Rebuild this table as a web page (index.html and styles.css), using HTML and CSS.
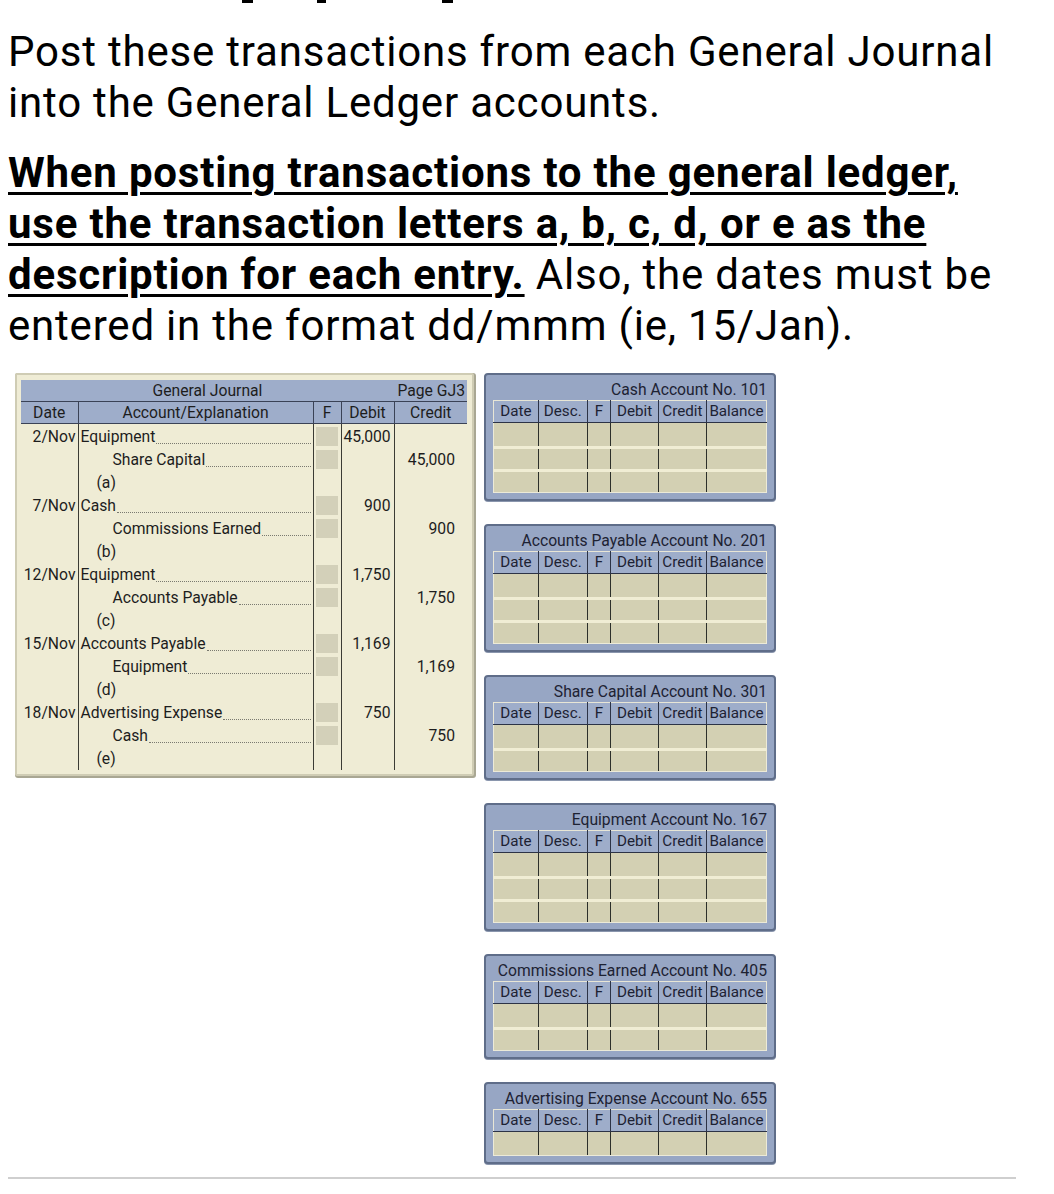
FILE: index.html
```html
<!DOCTYPE html>
<html>
<head>
<meta charset="utf-8">
<link rel="stylesheet" href="styles.css">
</head>
<body>
<div class="cutoff"><span class="m1"></span><span class="m2"></span><span class="m3"></span></div>
<main class="page">
  <p class="intro">Post these transactions from each General Journal into the General Ledger accounts.</p>
  <p class="intro second"><strong class="uline">When posting transactions to the general ledger, use the transaction letters a, b, c, d, or e as the description for each entry.</strong> Also, the dates must be entered in the format dd/mmm (ie, 15/Jan).</p>

  <div class="work">
    <div class="journal">
      <table class="jt">
        <colgroup><col class="c-date"><col class="c-acct"><col class="c-f"><col class="c-dr"><col class="c-cr"></colgroup>
        <thead>
          <tr class="jt-title"><th colspan="4" class="t-center">General Journal</th><th class="t-page">Page GJ3</th></tr>
          <tr class="jt-head"><th>Date</th><th>Account/Explanation</th><th>F</th><th>Debit</th><th>Credit</th></tr>
        </thead>
        <tbody>
          <tr><td class="date">2/Nov</td><td><div class="acct"><span>Equipment</span><i class="lead"></i></div></td><td><div class="fbox"></div></td><td class="num first">45,000</td><td></td></tr>
          <tr><td></td><td><div class="acct cr"><span>Share Capital</span><i class="lead"></i></div></td><td><div class="fbox"></div></td><td></td><td class="num crn">45,000</td></tr>
          <tr><td></td><td class="expl">(a)</td><td></td><td></td><td></td></tr>
          <tr><td class="date">7/Nov</td><td><div class="acct"><span>Cash</span><i class="lead"></i></div></td><td><div class="fbox"></div></td><td class="num">900</td><td></td></tr>
          <tr><td></td><td><div class="acct cr"><span>Commissions Earned</span><i class="lead"></i></div></td><td><div class="fbox"></div></td><td></td><td class="num crn">900</td></tr>
          <tr><td></td><td class="expl">(b)</td><td></td><td></td><td></td></tr>
          <tr><td class="date">12/Nov</td><td><div class="acct"><span>Equipment</span><i class="lead"></i></div></td><td><div class="fbox"></div></td><td class="num">1,750</td><td></td></tr>
          <tr><td></td><td><div class="acct cr"><span>Accounts Payable</span><i class="lead"></i></div></td><td><div class="fbox"></div></td><td></td><td class="num crn">1,750</td></tr>
          <tr><td></td><td class="expl">(c)</td><td></td><td></td><td></td></tr>
          <tr><td class="date">15/Nov</td><td><div class="acct"><span>Accounts Payable</span><i class="lead"></i></div></td><td><div class="fbox"></div></td><td class="num">1,169</td><td></td></tr>
          <tr><td></td><td><div class="acct cr"><span>Equipment</span><i class="lead"></i></div></td><td><div class="fbox"></div></td><td></td><td class="num crn">1,169</td></tr>
          <tr><td></td><td class="expl">(d)</td><td></td><td></td><td></td></tr>
          <tr><td class="date">18/Nov</td><td><div class="acct"><span>Advertising Expense</span><i class="lead"></i></div></td><td><div class="fbox"></div></td><td class="num">750</td><td></td></tr>
          <tr><td></td><td><div class="acct cr"><span>Cash</span><i class="lead"></i></div></td><td><div class="fbox"></div></td><td></td><td class="num crn">750</td></tr>
          <tr><td></td><td class="expl">(e)</td><td></td><td></td><td></td></tr>
        </tbody>
      </table>
    </div>

    <div class="ledgers">
      <div class="ledger">
        <div class="l-title">Cash Account No. 101</div>
        <table class="lt">
          <colgroup><col class="w-date"><col class="w-desc"><col class="w-f"><col class="w-dr"><col class="w-cr"><col class="w-bal"></colgroup>
          <thead><tr><th>Date</th><th>Desc.</th><th>F</th><th>Debit</th><th>Credit</th><th>Balance</th></tr></thead>
          <tbody>
            <tr><td></td><td></td><td></td><td></td><td></td><td></td></tr>
            <tr><td></td><td></td><td></td><td></td><td></td><td></td></tr>
            <tr><td></td><td></td><td></td><td></td><td></td><td></td></tr>
          </tbody>
        </table>
      </div>
      <div class="ledger">
        <div class="l-title">Accounts Payable Account No. 201</div>
        <table class="lt">
          <colgroup><col class="w-date"><col class="w-desc"><col class="w-f"><col class="w-dr"><col class="w-cr"><col class="w-bal"></colgroup>
          <thead><tr><th>Date</th><th>Desc.</th><th>F</th><th>Debit</th><th>Credit</th><th>Balance</th></tr></thead>
          <tbody>
            <tr><td></td><td></td><td></td><td></td><td></td><td></td></tr>
            <tr><td></td><td></td><td></td><td></td><td></td><td></td></tr>
            <tr><td></td><td></td><td></td><td></td><td></td><td></td></tr>
          </tbody>
        </table>
      </div>
      <div class="ledger">
        <div class="l-title">Share Capital Account No. 301</div>
        <table class="lt">
          <colgroup><col class="w-date"><col class="w-desc"><col class="w-f"><col class="w-dr"><col class="w-cr"><col class="w-bal"></colgroup>
          <thead><tr><th>Date</th><th>Desc.</th><th>F</th><th>Debit</th><th>Credit</th><th>Balance</th></tr></thead>
          <tbody>
            <tr><td></td><td></td><td></td><td></td><td></td><td></td></tr>
            <tr><td></td><td></td><td></td><td></td><td></td><td></td></tr>
          </tbody>
        </table>
      </div>
      <div class="ledger">
        <div class="l-title">Equipment Account No. 167</div>
        <table class="lt">
          <colgroup><col class="w-date"><col class="w-desc"><col class="w-f"><col class="w-dr"><col class="w-cr"><col class="w-bal"></colgroup>
          <thead><tr><th>Date</th><th>Desc.</th><th>F</th><th>Debit</th><th>Credit</th><th>Balance</th></tr></thead>
          <tbody>
            <tr><td></td><td></td><td></td><td></td><td></td><td></td></tr>
            <tr><td></td><td></td><td></td><td></td><td></td><td></td></tr>
            <tr><td></td><td></td><td></td><td></td><td></td><td></td></tr>
          </tbody>
        </table>
      </div>
      <div class="ledger">
        <div class="l-title">Commissions Earned Account No. 405</div>
        <table class="lt">
          <colgroup><col class="w-date"><col class="w-desc"><col class="w-f"><col class="w-dr"><col class="w-cr"><col class="w-bal"></colgroup>
          <thead><tr><th>Date</th><th>Desc.</th><th>F</th><th>Debit</th><th>Credit</th><th>Balance</th></tr></thead>
          <tbody>
            <tr><td></td><td></td><td></td><td></td><td></td><td></td></tr>
            <tr><td></td><td></td><td></td><td></td><td></td><td></td></tr>
          </tbody>
        </table>
      </div>
      <div class="ledger">
        <div class="l-title">Advertising Expense Account No. 655</div>
        <table class="lt">
          <colgroup><col class="w-date"><col class="w-desc"><col class="w-f"><col class="w-dr"><col class="w-cr"><col class="w-bal"></colgroup>
          <thead><tr><th>Date</th><th>Desc.</th><th>F</th><th>Debit</th><th>Credit</th><th>Balance</th></tr></thead>
          <tbody>
            <tr><td></td><td></td><td></td><td></td><td></td><td></td></tr>
          </tbody>
        </table>
      </div>
    </div>
  </div>
  <hr class="rule">
</main>
</body>
</html>
```

FILE: styles.css
```css
html, body {
  margin: 0;
  padding: 0;
  background: #ffffff;
}
body {
  font-family: Roboto, "Liberation Sans", sans-serif;
  color: #000;
}
.cutoff {
  height: 3px;
  display: flex;
  padding-left: 242px;
}
.cutoff span {
  display: block;
  height: 3px;
  background: #000;
}
.m1 { width: 11px; }
.m2 { width: 9px; margin-left: 64px; }
.m3 { width: 11px; margin-left: 116px; }

.page {
  width: 1008px;
  padding-left: 8px;
}
.intro {
  font-size: 42px;
  line-height: 51px;
  margin: 23px 0 0 0;
  letter-spacing: 0.8px;
}
.intro.second {
  margin-top: 19px;
}
.uline {
  font-weight: 700;
  letter-spacing: 0.8px;
  text-decoration: underline;
  text-decoration-thickness: 3px;
  text-underline-offset: 5px;
}

.work {
  display: flex;
  align-items: flex-start;
  margin-top: 22px;
  padding-left: 7px;
  gap: 10px;
}

/* General journal */
.journal {
  width: 446px;
  background: #efecd5;
  border: 2px solid #cfccb4;
  box-shadow: 1px 1px 0 1px #a9a793;
  border-radius: 2px;
  padding: 5px 5px 4px 4px;
}
.jt {
  width: 446px;
  border-collapse: collapse;
  table-layout: fixed;
  font-size: 15.7px;
  color: #1d1d1d;
}
.c-date { width: 57px; }
.c-acct { width: 235px; }
.c-f { width: 28px; }
.c-dr { width: 53px; }
.c-cr { width: 73px; }

.jt th {
  font-weight: 400;
  background: #9eadca;
  height: 21px;
  padding: 0;
  line-height: 21px;
  white-space: nowrap;
}
.jt-title th {
  height: 21px;
  border-bottom: 1px solid #3a4256;
}
.t-page {
  text-align: right;
  padding-right: 2px !important;
}
.jt-head th {
  border-left: 1px solid #3a4256;
  border-bottom: 1px solid #3a4256;
  text-align: center;
}
.jt-head th:first-child { border-left: none; }

.jt td {
  height: 23px;
  padding: 0;
  line-height: 23px;
  border-left: 1px solid #3b3b34;
  white-space: nowrap;
  vertical-align: middle;
}
.jt td:first-child { border-left: none; }
.jt tbody tr:first-child td { height: 24px; }
.jt td.date {
  text-align: right;
  padding-right: 2px;
}
.acct {
  display: flex;
  align-items: flex-end;
  padding-left: 2px;
  padding-right: 2px;
  height: 23px;
}
.acct span { line-height: 23px; }
.acct.cr { padding-left: 34px; }
.lead {
  flex: 1;
  border-bottom: 1px dotted #7a7a70;
  margin-bottom: 4px;
  margin-left: 1px;
}
.expl {
  padding-left: 18px !important;
}
.fbox {
  width: 22px;
  height: 19px;
  margin: 0 auto;
  background: #d3d0b9;
}
.num {
  text-align: right;
  padding-right: 3px !important;
}
.num.crn {
  padding-right: 12px !important;
}
.num.first { text-align: left; padding-left: 2px !important; }

/* Ledgers */
.ledgers {
  display: flex;
  flex-direction: column;
  gap: 23px;
}
.ledger {
  width: 274px;
  background: #97a6c4;
  border: 2px solid #5f6d89;
  border-radius: 4px;
  padding: 4px 7px 6px 7px;
  box-shadow: 0 1px 0 #8a96ad;
}
.l-title {
  text-align: right;
  font-size: 15.7px;
  line-height: 21px;
  height: 21px;
  color: #1d2233;
}
.lt {
  width: 274px;
  border-collapse: collapse;
  table-layout: fixed;
  font-size: 15.2px;
  color: #1d2233;
}
.w-date { width: 44px; }
.w-desc { width: 48px; }
.w-f { width: 23px; }
.w-dr { width: 47px; }
.w-cr { width: 47px; }
.w-bal { width: 59px; }

.lt thead th {
  font-weight: 400;
  height: 21px;
  line-height: 21px;
  padding: 0;
  background: #9eadca;
  border: 1px solid #2c3346;
  white-space: nowrap;
  text-align: center;
  overflow: visible;
}
.lt thead th:first-child { border-left-color: #e8e6d6; }
.lt thead th:last-child { border-right-color: #e8e6d6; }
.lt thead tr th { border-top-color: #e8e6d6; }

.lt td {
  height: 20px;
  padding: 0;
  background: #d3d0b3;
  border-left: 1px solid #2c2f2a;
  border-right: 1px solid #2c2f2a;
  border-top: 3px solid #f0edd4;
}
.lt td:first-child { border-left-color: #ecead8; }
.lt td:last-child { border-right-color: #ecead8; }
.lt tbody tr:first-child td { border-top: none; height: 23px; }
.lt tbody tr:last-child td { border-bottom: 1px solid #ecead8; }

.rule {
  border: none;
  height: 2px;
  background: #cfcfcf;
  margin: 13px 0 0 0;
  width: 1008px;
}
```
